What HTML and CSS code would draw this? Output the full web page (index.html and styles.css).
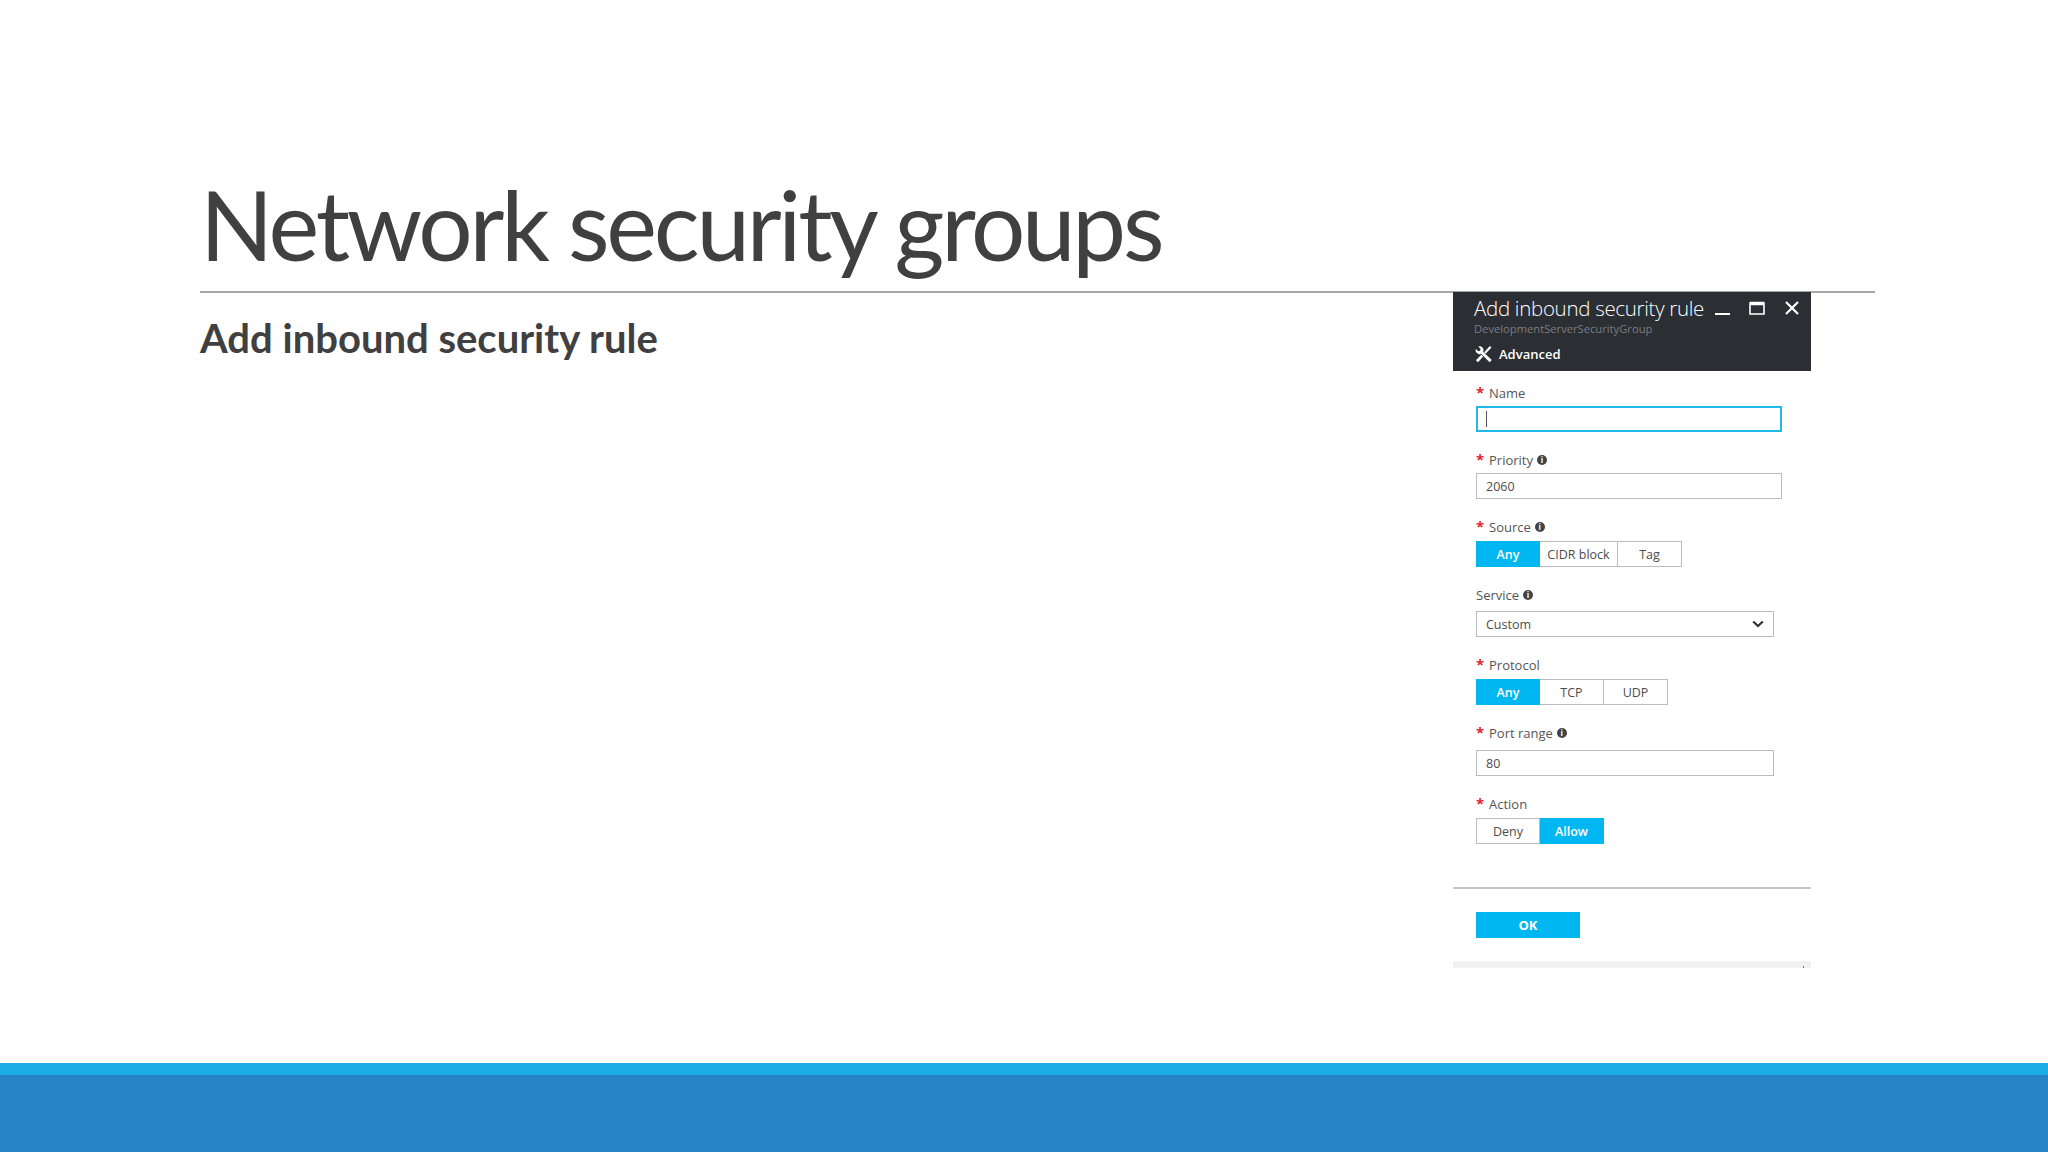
FILE: index.html
```html
<!DOCTYPE html>
<html lang="en">
<head>
    <meta charset="UTF-8">
    <meta name="viewport" content="width=device-width, initial-scale=1.0">
    <title>Network security groups</title>
    <link rel="stylesheet" href="styles.css">
</head>
<body>
<div class="slide">
    <div class="slide-head">
        <h1>Network security groups</h1>
    </div>

    <div class="slide-body">
        <h2>Add inbound security rule</h2>

        <div class="blade">
            <div class="blade-head">
                <div class="blade-title-row">
                    <span class="blade-title">Add inbound security rule</span>
                    <svg class="win-icon win-min" viewBox="0 0 15 14"><path d="M0 13h15" stroke="#fff" stroke-width="2"/></svg>
                    <svg class="win-icon win-max" viewBox="0 0 16 14"><path d="M1 2h14v11H1z" fill="none" stroke="#fff" stroke-width="1.6"/><path d="M1 2.500h14" stroke="#fff" stroke-width="3.500"/></svg>
                    <svg class="win-icon win-close" viewBox="0 0 14 14"><path d="M1 1l12 12M13 1L1 13" stroke="#fff" stroke-width="2.200"/></svg>
                </div>
                <div class="blade-sub">DevelopmentServerSecurityGroup</div>
                <div class="blade-cmd">
                    <svg class="tools-icon" viewBox="0 0 18 18">
                        <g transform="matrix(-1 0 0 1 18 0)">
                            <path d="M1.500 2.500l1.600-1.400 5.800 6.200-1.500 1.500z" fill="#fff"/>
                            <path d="M1.200 15l8.800-8.200a3.400 3.400 0 0 1 .6-4.200A3.600 3.600 0 0 1 14.700 1.600l-2.300 2.300.5 1.900 1.900.5 2.300-2.300a3.600 3.600 0 0 1-1 4.100 3.400 3.400 0 0 1-4.200.6L3.400 17.200z" fill="#fff"/>
                            <path d="M9.800 11.500l1.900-1.700 5.400 5.400-2.100 2.100z" fill="#fff"/>
                        </g>
                    </svg>
                    <span>Advanced</span>
                </div>
            </div>

            <div class="blade-form">
                <div class="field">
                    <div class="field-label"><span class="req">*</span>Name</div>
                    <div class="text-box wide focused"><span class="caret"></span></div>
                </div>
                <div class="field">
                    <div class="field-label"><span class="req">*</span>Priority<span class="info">i</span></div>
                    <div class="text-box wide">2060</div>
                </div>
                <div class="field">
                    <div class="field-label label-seg"><span class="req">*</span>Source<span class="info">i</span></div>
                    <div class="seg">
                        <span class="seg-item on">Any</span>
                        <span class="seg-item cidr">CIDR block</span>
                        <span class="seg-item">Tag</span>
                    </div>
                </div>
                <div class="field">
                    <div class="field-label label-select">Service<span class="info">i</span></div>
                    <div class="text-box">
                        <span>Custom</span>
                        <svg class="chevron" viewBox="0 0 12 8"><path d="M1.200 1.500L6 6l4.800-4.500" fill="none" stroke="#333" stroke-width="2.200"/></svg>
                    </div>
                </div>
                <div class="field">
                    <div class="field-label label-seg"><span class="req">*</span>Protocol</div>
                    <div class="seg">
                        <span class="seg-item on">Any</span>
                        <span class="seg-item">TCP</span>
                        <span class="seg-item">UDP</span>
                    </div>
                </div>
                <div class="field">
                    <div class="field-label label-port"><span class="req">*</span>Port range<span class="info">i</span></div>
                    <div class="text-box">80</div>
                </div>
                <div class="field">
                    <div class="field-label label-seg"><span class="req">*</span>Action</div>
                    <div class="seg">
                        <span class="seg-item">Deny</span>
                        <span class="seg-item on">Allow</span>
                    </div>
                </div>
            </div>

            <div class="blade-foot">
                <button type="button" class="ok-btn">OK</button>
            </div>
            <div class="blade-strip"></div>
        </div>
    </div>

    <div class="slide-foot">
        <div class="foot-light"></div>
        <div class="foot-dark"></div>
    </div>
</div>
</body>
</html>
```

FILE: styles.css
```css
* {
    box-sizing: border-box;
}

body {
    margin: 0;
    background: #fff;
    color: #404040;
    font-family: "Lato", "Liberation Sans", sans-serif;
}

.slide {
    width: 2048px;
    height: 1152px;
    display: flex;
    flex-direction: column;
    overflow: hidden;
}

.slide-head {
    height: 293px;
    margin: 0 173px 0 200px;
    padding-top: 168px;
    border-bottom: 2px solid #a6a6a6;
}

h1 {
    margin: 0;
    font-size: 96px;
    line-height: 112px;
    font-weight: 400;
    letter-spacing: -3.250px;
    white-space: nowrap;
}

.slide-body {
    flex: 1;
    display: flex;
    justify-content: space-between;
    align-items: flex-start;
    margin: -1px 237px 0 200px;
}

h2 {
    margin: 23px 0 0;
    font-size: 40px;
    line-height: 46px;
    font-weight: 700;
}

/* the portal blade */
.blade {
    width: 358px;
    font-family: "Open Sans", "Noto Sans", sans-serif;
    font-size: 13px;
    color: #555;
}

.blade-head {
    height: 79px;
    padding: 1px 9px 0 21px;
    background: #2b2e33;
    color: #fff;
}

.blade-title-row {
    display: flex;
    align-items: center;
    height: 30px;
}

.blade-title {
    font-size: 20.500px;
    font-weight: 300;
    letter-spacing: -0.3px;
    white-space: nowrap;
}

.win-icon {
    display: block;
    flex: none;
}

.win-min {
    width: 15px;
    height: 14px;
    margin-left: 11px;
}

.win-max {
    width: 16px;
    height: 14px;
    margin-left: 19px;
}

.win-close {
    width: 14px;
    height: 14px;
    margin-left: 20px;
}

.blade-sub {
    height: 12px;
    font-size: 11.200px;
    line-height: 12px;
    color: #7a7d81;
    white-space: nowrap;
}

.blade-cmd {
    display: flex;
    align-items: center;
    gap: 6px;
    height: 30px;
    margin-top: 4px;
    padding-left: 1px;
    font-size: 13px;
    font-weight: 600;
}

.tools-icon {
    width: 18px;
    height: 18px;
}

.blade-form {
    padding: 12px 29px 0 23px;
}

.field {
    margin-bottom: 18px;
}

.field:last-child {
    margin-bottom: 0;
}

.field-label {
    display: flex;
    align-items: center;
    height: 20px;
    margin-bottom: 3px;
    white-space: nowrap;
}

.label-seg {
    margin-bottom: 4px;
}

.label-select {
    margin-bottom: 6px;
}

.label-port {
    margin-bottom: 7px;
}

.req {
    width: 13px;
    height: 20px;
    color: #e01f3d;
    font-weight: 700;
    font-size: 15px;
    line-height: 18px;
}

.info {
    width: 10px;
    height: 10px;
    margin-left: 4px;
    border-radius: 50%;
    background: #3f4448;
    color: #fff;
    font-size: 8px;
    font-weight: 700;
    line-height: 10px;
    text-align: center;
}

.text-box {
    display: flex;
    align-items: center;
    justify-content: space-between;
    width: 298px;
    height: 26px;
    padding: 0 9px;
    border: 1px solid #b9bbbd;
    font-size: 12.500px;
    color: #4d4d4d;
}

.text-box.wide {
    width: 306px;
}

.text-box.focused {
    border: 2px solid #1fb8e8;
    padding-left: 8px;
}

.caret {
    width: 1px;
    height: 16px;
    background: #555;
}

.chevron {
    width: 12px;
    height: 8px;
}

.seg {
    display: flex;
    height: 26px;
}

.seg-item {
    display: flex;
    align-items: center;
    justify-content: center;
    width: 64px;
    border: 1px solid #b9bbbd;
    border-left: 0;
    font-size: 12.500px;
    color: #4d4d4d;
}

.seg-item:first-child {
    border-left: 1px solid #b9bbbd;
}

.seg-item.cidr {
    width: 78px;
    white-space: nowrap;
}

.seg-item.on {
    background: #00b7f1;
    border-color: #00b7f1;
    color: #fff;
    font-weight: 600;
}

.blade-foot {
    margin-top: 43px;
    padding: 23px 0 23px 23px;
    border-top: 2px solid #c4c5c7;
}

.ok-btn {
    display: block;
    width: 104px;
    height: 26px;
    padding: 0;
    border: 0;
    background: #00b7f1;
    color: #fff;
    font-family: inherit;
    font-size: 13px;
    font-weight: 700;
}

.blade-strip {
    display: flex;
    justify-content: flex-end;
    align-items: flex-end;
    height: 7px;
    padding-right: 7px;
    background: #f1f1f2;
}

.blade-strip::after {
    content: "";
    width: 1px;
    height: 2px;
    background: #777;
}

.slide-foot {
    flex: none;
}

.foot-light {
    height: 12px;
    background: #1cade4;
}

.foot-dark {
    height: 77px;
    background: #2683c6;
}
```
